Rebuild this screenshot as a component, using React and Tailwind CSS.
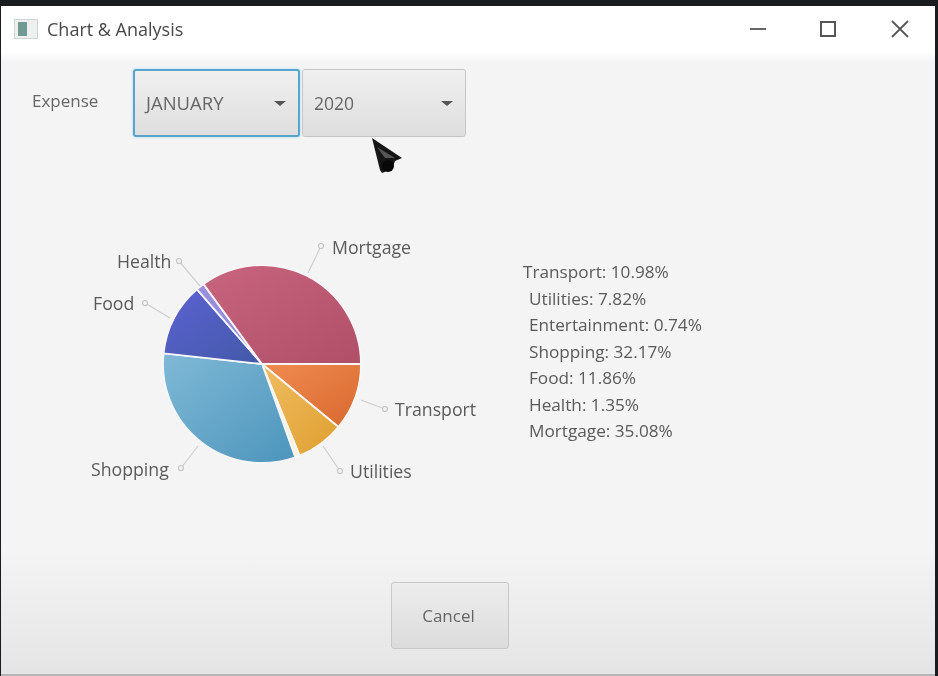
const slices = [
  { id: "transport", from: 0, to: 39.5, c1: "#f08c50", c2: "#d8682e" },
  { id: "utilities", from: 39.5, to: 67.7, c1: "#f0bd62", c2: "#df9f30" },
  { id: "entertainment", from: 67.7, to: 70.4, c1: "#f7f3dc", c2: "#f7f3dc" },
  { id: "shopping", from: 70.4, to: 186.2, c1: "#80b9d6", c2: "#4c95bc" },
  { id: "food", from: 186.2, to: 228.9, c1: "#5c62d2", c2: "#4259a8" },
  { id: "health", from: 228.9, to: 233.8, c1: "#9a90de", c2: "#8d86da" },
  { id: "mortgage", from: 233.8, to: 360, c1: "#c8647e", c2: "#b04f68" },
];

const labels = [
  { text: "Mortgage", x: 252, y: 24, dot: [241, 16], line: [228, 43] },
  { text: "Health", x: 37, y: 38, dot: [99, 31], line: [120, 56] },
  { text: "Food", x: 13, y: 80, dot: [65, 73], line: [90, 88] },
  { text: "Transport", x: 315, y: 186, dot: [305, 179], line: [281, 170] },
  { text: "Utilities", x: 270, y: 248, dot: [260, 241], line: [243, 216] },
  { text: "Shopping", x: 11, y: 246, dot: [101, 238], line: [118, 216] },
];

const stats = [
  "Utilities: 7.82%",
  "Entertainment: 0.74%",
  "Shopping: 32.17%",
  "Food: 11.86%",
  "Health: 1.35%",
  "Mortgage: 35.08%",
];

const cx = 182;
const cy = 134;
const r = 99;

function slicePath(from, to) {
  const a = (from * Math.PI) / 180;
  const b = (to * Math.PI) / 180;
  const large = to - from > 180 ? 1 : 0;
  const x1 = cx + r * Math.cos(a);
  const y1 = cy + r * Math.sin(a);
  const x2 = cx + r * Math.cos(b);
  const y2 = cy + r * Math.sin(b);
  return `M${cx} ${cy}L${x1} ${y1}A${r} ${r} 0 ${large} 1 ${x2} ${y2}Z`;
}

function PieChart() {
  return (
    <svg width="400" height="260" viewBox="0 0 400 260" className="shrink-0 blur-[0.5px]">
      <defs>
        {slices.map((s) => (
          <linearGradient key={s.id} id={s.id} x1="0" y1="0" x2="1" y2="1">
            <stop offset="0" stopColor={s.c1} />
            <stop offset="1" stopColor={s.c2} />
          </linearGradient>
        ))}
      </defs>
      {slices.map((s) => (
        <path key={s.id} d={slicePath(s.from, s.to)} fill={`url(#${s.id})`} stroke="#f8f6f8" strokeWidth="1.8" />
      ))}
      {labels.map((l) => (
        <g key={l.text}>
          <line x1={l.dot[0]} y1={l.dot[1]} x2={l.line[0]} y2={l.line[1]} stroke="#cfcfcf" strokeWidth="1.2" />
          <circle cx={l.dot[0]} cy={l.dot[1]} r="2.5" fill="#f4f4f4" stroke="#c4c4c4" strokeWidth="1.2" />
          <text x={l.x} y={l.y} fontSize="17.7" fill="#5a5a5a">
            {l.text}
          </text>
        </g>
      ))}
    </svg>
  );
}

function Combo({ label, focused, width, textSize }) {
  return (
    <div
      className={`flex items-center justify-between h-[68px] pl-[11px] pr-[12px] rounded-[3px] bg-linear-to-b from-[#f0f0f0] to-[#dedede] text-[#666666] ${textSize} ${width} ${
        focused ? "border-2 border-[#55a5cc] shadow-[0_0_3px_#a8d8ee]" : "border border-[#c6c6c6]"
      }`}
    >
      <span className="blur-[0.4px]">{label}</span>
      <span className="w-0 h-0 border-x-[6px] border-x-transparent border-t-[5px] border-t-[#555555] blur-[0.3px]" />
    </div>
  );
}

export default function App() {
  return (
    <div className="relative flex flex-col h-[676px] w-[938px] overflow-hidden bg-[#1b1c20] pt-[6px] pr-[3px] pl-px font-['Open_Sans',sans-serif]">
      <div className="flex items-center h-[46px] bg-white shrink-0">
        <div className="flex items-center w-[24px] h-[20px] ml-[13px] border border-[#cfd5d4] bg-[#eef0f0] blur-[0.5px]">
          <div className="w-[9px] h-[14px] ml-[3px] bg-[#6f9a93]" />
        </div>
        <span className="ml-[9px] text-[18px] text-[#484848] blur-[0.4px]">Chart &amp; Analysis</span>
        <div className="flex items-center ml-auto blur-[0.4px]">
          <div className="w-[16px] h-[2px] mr-[54px] bg-[#666666]" />
          <div className="w-[16px] h-[16px] mr-[55px] border-2 border-[#555555]" />
          {/* close icon */}
          <svg width="18" height="18" viewBox="0 0 18 18" className="mr-[26px]">
            <path d="M1 1L17 17M17 1L1 17" stroke="#555555" strokeWidth="1.8" fill="none" />
          </svg>
        </div>
      </div>

      <div className="flex-1 flex flex-col bg-[linear-gradient(to_bottom,#ffffff_0,#f4f4f4_10px,#f4f4f4_80%,#e5e5e5_100%)] border-b-2 border-b-[#b4b4b4]">
        <div className="flex items-center mt-[17px] pl-[31px]">
          <span className="w-[101px] mb-[5px] text-[17px] text-[#666666] blur-[0.4px]">Expense</span>
          <Combo label="JANUARY" focused width="w-[167px]" textSize="text-[18.5px]" />
          <div className="w-[2px]" />
          <Combo label="2020" width="w-[164px]" textSize="text-[17.5px]" />
        </div>

        <div className="flex items-start mt-[93px] ml-[79px]">
          <PieChart />
          <div className="mt-[29px] ml-[49px] text-[17.2px] leading-[26.5px] text-[#5a5a5a] whitespace-nowrap blur-[0.4px]">
            <div className="-ml-[6px]">Transport: 10.98%</div>
            {stats.map((line) => (
              <div key={line}>{line}</div>
            ))}
          </div>
        </div>

        <button className="w-[118px] h-[67px] mt-[92px] ml-[390px] rounded-[3px] border border-[#c8c8c8] bg-linear-to-b from-[#ededed] to-[#dcdcdc] text-[17px] text-[#666666]">
          <span className="blur-[0.4px] -ml-[3px]">Cancel</span>
        </button>
      </div>

      {/* mouse pointer from the recording */}
      <svg width="40" height="44" viewBox="0 0 40 44" className="absolute left-[368px] top-[134px] blur-[0.6px]">
        <path d="M4 4L34 24L27 27L24 35L14 39L12 36Z" fill="#151515" />
        <path d="M9 13L27 24L17 24Z" fill="#555555" />
        <circle cx="20" cy="32" r="6" fill="#080808" />
      </svg>
    </div>
  );
}
